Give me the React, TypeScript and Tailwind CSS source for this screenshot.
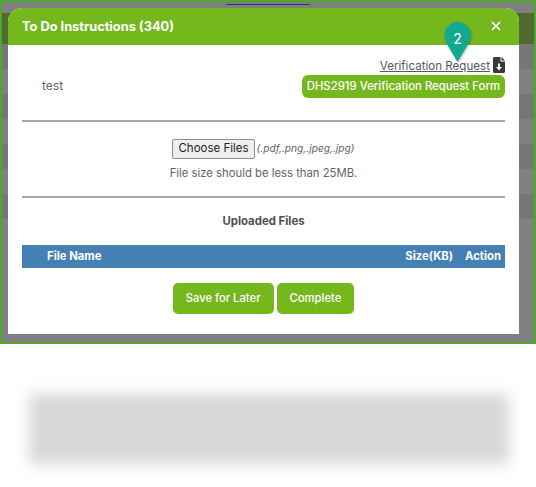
import React from 'react';
import { X } from 'lucide-react';

const font = { fontFamily: 'Inter, "Liberation Sans", sans-serif' };

const Pin = () => (
  <svg className="absolute left-[443px] top-[21px] drop-shadow-[1px_1px_1px_rgba(0,0,0,0.25)]" width="29" height="42" viewBox="0 0 29 42">
    <path d="M14.500 1C7 1 1.500 7 1.500 14C1.500 18.500 3 21 5 25L14.500 41L24 25C26 21 27.500 18.500 27.500 14C27.500 7 22 1 14.500 1Z" fill="#13a98f" />
  </svg>
);

const FileIcon = () => (
  <svg width="12" height="16" viewBox="0 0 12 16">
    <path d="M0 1.500C0 .7.700 0 1.500 0H7.500V4.500H12V14.500C12 15.300 11.300 16 10.500 16H1.500C.7 16 0 15.300 0 14.500Z" fill="#3a3a3a" />
    <path d="M8.500 0L12 3.500H8.500Z" fill="#3a3a3a" />
    <path d="M5 6.500H7V10H9L6 13.500L3 10H5Z" fill="#fff" />
  </svg>
);

const App = () => {
  const rows = ['bg-[#767676]', 'bg-[#808080]', 'bg-[#767676]', 'bg-[#808080]', 'bg-[#767676]', 'bg-[#808080]', 'bg-[#767676]', 'bg-[#808080]', 'bg-[#808080]', 'bg-[#808080]', 'bg-[#808080]'];

  return (
    <div className="relative h-[487px] w-[536px] overflow-hidden bg-white" style={font}>
      <div className="relative h-[344px] overflow-hidden border-2 border-[#4fa82e] bg-[#808080]">
        <div className="mx-auto mt-[2px] h-[1px] w-[84px] bg-[#1f3f66]" />
        <div className="mt-[8px] h-[31px] bg-[#4f6a30]" />
        {rows.map((row, i) => (
          <div key={i} className={`h-[25px] ${row}`} />
        ))}
      </div>

      <div className="absolute left-[8px] top-[8px] flex h-[326px] w-[511px] flex-col overflow-hidden rounded-t-[14px] bg-white">
        <div className="flex h-[37px] items-center justify-between bg-[#74b81e] pl-[14px] pr-[16px] text-white">
          <span className="text-[12.800px] font-bold">To Do Instructions (340)</span>
          <X className="mt-[-2px] h-[14px] w-[14px]" strokeWidth={3} />
        </div>

        <div className="mx-[14px] flex h-[77px] border-b-2 border-[#a5a8ab]">
          <div className="flex-1 pl-[20px] pt-[32px] text-[12px] text-[#5f6469]">test</div>
          <div className="flex flex-col items-end pt-[12px]">
            <div className="flex items-start gap-[3px]">
              <span className="mt-[1px] text-[11.600px] leading-[16px] text-[#54595e] underline">Verification Request</span>
              <FileIcon />
            </div>
            <div className="mt-[1px] flex h-[23px] items-center rounded-[6px] bg-[#74b81e] px-[5px] text-[11.350px] font-medium text-white">
              DHS2919 Verification Request Form
            </div>
          </div>
        </div>

        <div className="mx-[14px] flex h-[76px] flex-col items-center border-b-2 border-[#a5a8ab] pt-[17px]">
          <div className="flex items-center gap-[2px]">
            <button className="h-[20px] rounded-[2px] border border-[#8f8f8f] bg-[#efefef] px-[5px] text-[11.500px] text-[#222]">
              Choose Files
            </button>
            <span className="text-[10.200px] italic text-[#5f6469]">(.pdf,.png,.jpeg,.jpg)</span>
          </div>
          <div className="mt-[6px] text-[11.300px] text-[#5f6469]">File size should be less than 25MB.</div>
        </div>

        <div className="mt-[15px] text-center text-[11.400px] font-bold text-[#4c5156]">Uploaded Files</div>

        <div className="mx-[14px] mt-[15px] flex h-[23px] items-center bg-[#4580b5] pl-[25px] pr-[4px] text-[11.300px] font-bold text-white">
          <span className="flex-1">File Name</span>
          <span>Size(KB)</span>
          <span className="ml-[12px]">Action</span>
        </div>

        <div className="mt-[15px] flex justify-center gap-[3px]">
          <button className="h-[31px] rounded-[5px] bg-[#74b81e] px-[13px] text-[11.250px] font-medium text-white">Save for Later</button>
          <button className="h-[31px] rounded-[5px] bg-[#74b81e] px-[13px] text-[11.250px] font-medium text-white">Complete</button>
        </div>
      </div>

      <Pin />
      <span className="absolute left-[443px] top-[28px] w-[29px] text-center text-[14px] text-white">2</span>

      <div className="absolute left-[29px] top-[394px] h-[70px] w-[480px] bg-[#d8d8d8] blur-[7px]" />
    </div>
  );
};

export default App;
